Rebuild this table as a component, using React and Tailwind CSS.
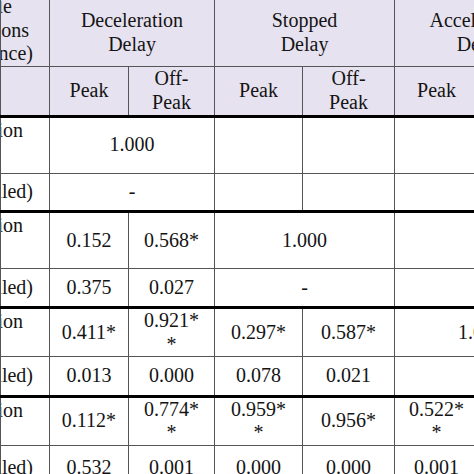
import React from "react";

const thin = "border border-[#555]";
const thick = "border-b-[3px] border-b-black";

function Cell({ children, span = 1, bottom = false, className = "" }) {
  return (
    <td
      colSpan={span}
      className={`${thin} ${bottom ? thick : ""} p-0 text-center align-middle ${className}`}
    >
      {children}
    </td>
  );
}

// first column: text is cropped on the left, so lines are pushed to their visible end
function Label({ lines, top = true, h }) {
  return (
    <div className={`flex flex-col overflow-hidden ${top ? "justify-start pt-[1px]" : "justify-center"} ${h}`}>
      {lines.map(([text, pr]) => (
        <div key={text} className={`flex justify-end whitespace-nowrap ${pr}`}>
          <span>{text}</span>
        </div>
      ))}
    </div>
  );
}

const rows = [
  {
    h: "h-[57px]",
    label: [["Correlation", "pr-[26px]"]],
    top: true,
    cells: [["1.000", 2], ["", 1], ["", 1], ["", 1], ["", 1]],
  },
  {
    h: "h-[38.5px]",
    label: [["Sig. (2-tailed)", "pr-[16px]"]],
    top: false,
    bottom: true,
    cells: [["-", 2], ["", 1], ["", 1], ["", 1], ["", 1]],
  },
  {
    h: "h-[56.5px]",
    label: [["Correlation", "pr-[26px]"]],
    top: true,
    cells: [["0.152", 1], ["0.568*", 1], ["1.000", 2], ["", 1], ["", 1]],
  },
  {
    h: "h-[39.5px]",
    label: [["Sig. (2-tailed)", "pr-[16px]"]],
    top: false,
    bottom: true,
    cells: [["0.375", 1], ["0.027", 1], ["-", 2], ["", 1], ["", 1]],
  },
  {
    h: "h-[48.5px]",
    label: [["Correlation", "pr-[26px]"]],
    top: true,
    cells: [["0.411*", 1], [["0.921*", "*"], 1], ["0.297*", 1], ["0.587*", 1], ["1.000", 2]],
  },
  {
    h: "h-[39.5px]",
    label: [["Sig. (2-tailed)", "pr-[16px]"]],
    top: false,
    bottom: true,
    cells: [["0.013", 1], ["0.000", 1], ["0.078", 1], ["0.021", 1], ["-", 2]],
  },
  {
    h: "h-[48.5px]",
    label: [["Correlation", "pr-[26px]"]],
    top: true,
    cells: [["0.112*", 1], [["0.774*", "*"], 1], [["0.959*", "*"], 1], ["0.956*", 1], [["0.522*", "*"], 1], ["0.614*", 1]],
  },
  {
    h: "h-[46px]",
    label: [["Sig. (2-tailed)", "pr-[16px]"]],
    top: false,
    cells: [["0.532", 1], ["0.001", 1], ["0.000", 1], ["0.000", 1], ["0.001", 1], ["0.000", 1]],
  },
];

export default function App() {
  return (
    <div className="w-[474px] h-[474px] overflow-hidden bg-white">
      <table className="table-fixed border-collapse w-[566px] text-[20px] leading-[23.5px] text-[#141414] font-['Liberation_Serif',serif]">
        <colgroup>
          <col className="w-[49px]" />
          <col className="w-[79px]" />
          <col className="w-[86px]" />
          <col className="w-[88px]" />
          <col className="w-[92px]" />
          <col className="w-[84px]" />
          <col className="w-[88px]" />
        </colgroup>
        <thead className="bg-[#e7e2ef]">
          <tr>
            <td className={`${thin} border-t-0 p-0 align-bottom h-[66px]`}>
              <div className="flex flex-col justify-end overflow-hidden h-[65px]">
                <div className="flex justify-end whitespace-nowrap pr-[37px]"><span>Variable</span></div>
                <div className="flex justify-end whitespace-nowrap pr-[20px]"><span>Correlations</span></div>
                <div className="flex justify-end whitespace-nowrap pr-[16px]"><span>(Significance)</span></div>
              </div>
            </td>
            <Cell span={2} className="border-t-0">Deceleration<br />Delay</Cell>
            <Cell span={2} className="border-t-0">Stopped<br />Delay</Cell>
            <Cell span={2} className="border-t-0">Acceleration<br />Delay</Cell>
          </tr>
          <tr className="h-[50px]">
            <Cell bottom />
            <Cell bottom>Peak</Cell>
            <Cell bottom>Off-<br />Peak</Cell>
            <Cell bottom>Peak</Cell>
            <Cell bottom>Off-<br />Peak</Cell>
            <Cell bottom>Peak</Cell>
            <Cell bottom>Off-<br />Peak</Cell>
          </tr>
        </thead>
        <tbody>
          {rows.map((r, i) => (
            <tr key={i} className={r.h}>
              <td className={`${thin} ${r.bottom ? thick : ""} p-0 ${r.top ? "align-top" : "align-middle"}`}>
                <Label lines={r.label} top={r.top} />
              </td>
              {r.cells.map(([v, span], j) => (
                <Cell key={j} span={span} bottom={r.bottom}>
                  {Array.isArray(v) ? (
                    <>
                      {v[0]}
                      <br />
                      {v[1]}
                    </>
                  ) : (
                    v
                  )}
                </Cell>
              ))}
            </tr>
          ))}
        </tbody>
      </table>
    </div>
  );
}
